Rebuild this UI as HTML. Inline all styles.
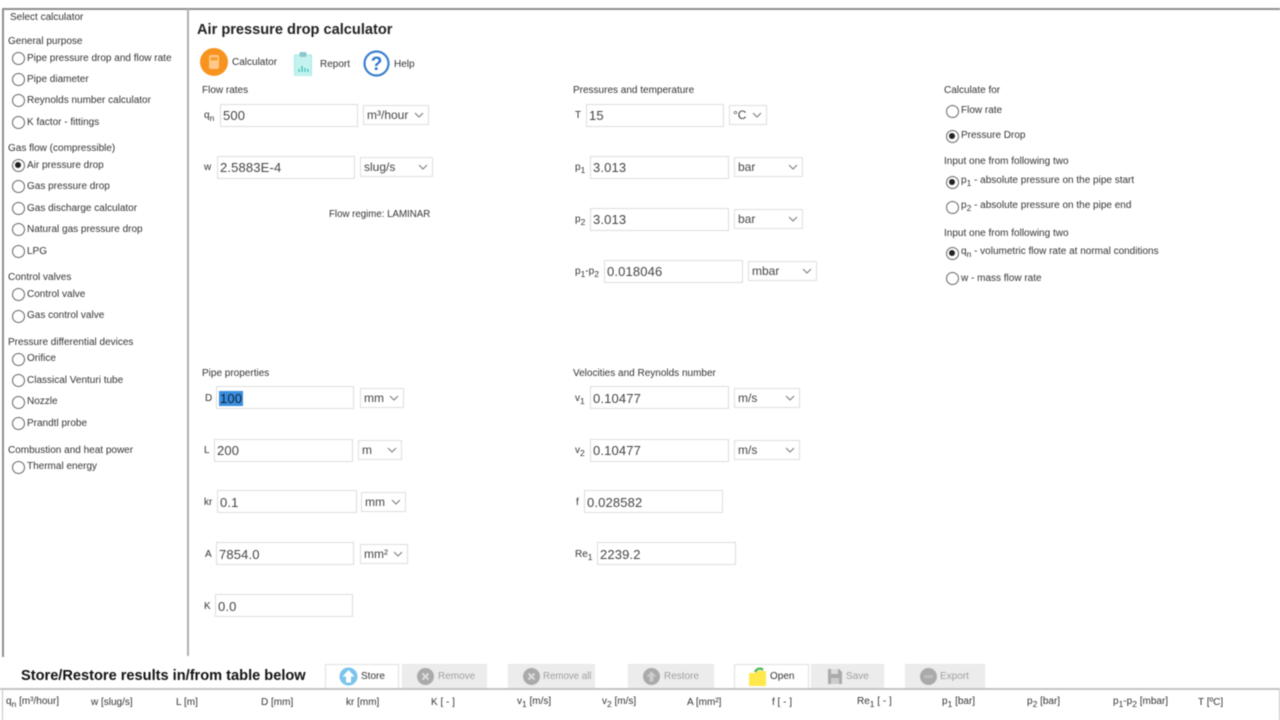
<!DOCTYPE html>
<html><head><meta charset="utf-8"><style>
html,body{margin:0;padding:0;background:#fff}
#p{position:relative;width:1280px;height:720px;overflow:hidden;background:#fff;font-family:"Liberation Sans",sans-serif;color:#333;filter:blur(.45px)}
.t{position:absolute;font-size:10px;line-height:14px;margin-top:1.500px;white-space:nowrap;color:#333}
.r{position:absolute;width:11px;height:11px;margin:-.5px 0 0 -.5px;box-sizing:content-box;border:1px solid #666;border-radius:50%;background:#fff}
.r.c:after{content:"";position:absolute;left:2.500px;top:2.500px;width:6px;height:6px;border-radius:50%;background:#222}
.i{position:absolute;box-sizing:border-box;height:23px;border:1px solid #dcdcdc;font-size:13px;letter-spacing:.15px;line-height:22px;padding-left:2px;color:#444;white-space:nowrap;background:#fff}
.i.o{line-height:24px}
.s{position:absolute;box-sizing:border-box;height:20px;border:1px solid #dedede;font-size:12px;line-height:18px;padding-left:3px;color:#444;white-space:nowrap;background:#fff}
.s svg{position:absolute;right:4px;top:6px}
.l{position:absolute;background:#8f8f8f}
.b{position:absolute;box-sizing:border-box;top:664px;height:25px;border:1px solid #e0e0e0;background:#fff;font-size:10px;line-height:23px;color:#333}
.b.d{background:#ececec;border-color:#e8e8e8;color:#a0a0a0}
.b span{position:absolute;top:0;white-space:nowrap}
.b svg{position:absolute;top:2px}
sub{font-size:8.5px;line-height:0;vertical-align:-3px}
</style></head><body><div id="p">
<div class="l" style="left:2px;top:8px;width:1278px;height:2px"></div>
<div class="l" style="left:2px;top:8px;width:2px;height:649px"></div>
<div class="l" style="left:187px;top:9px;width:2px;height:647px;background:#b0b0b0"></div>
<div class="t" style="left:10px;top:9px">Select calculator</div>
<div class="t" style="left:8px;top:33px">General purpose</div>
<div class="t" style="left:27px;top:50px">Pipe pressure drop and flow rate</div><div class="r" style="left:12px;top:52px"></div>
<div class="t" style="left:27px;top:71px">Pipe diameter</div><div class="r" style="left:12px;top:73px"></div>
<div class="t" style="left:27px;top:92px">Reynolds number calculator</div><div class="r" style="left:12px;top:94px"></div>
<div class="t" style="left:27px;top:114px">K factor - fittings</div><div class="r" style="left:12px;top:116px"></div>
<div class="t" style="left:8px;top:140px">Gas flow (compressible)</div>
<div class="t" style="left:27px;top:157px">Air pressure drop</div><div class="r c" style="left:12px;top:159px"></div>
<div class="t" style="left:27px;top:178px">Gas pressure drop</div><div class="r" style="left:12px;top:180px"></div>
<div class="t" style="left:27px;top:200px">Gas discharge calculator</div><div class="r" style="left:12px;top:202px"></div>
<div class="t" style="left:27px;top:221px">Natural gas pressure drop</div><div class="r" style="left:12px;top:223px"></div>
<div class="t" style="left:27px;top:243px">LPG</div><div class="r" style="left:12px;top:245px"></div>
<div class="t" style="left:8px;top:269px">Control valves</div>
<div class="t" style="left:27px;top:286px">Control valve</div><div class="r" style="left:12px;top:288px"></div>
<div class="t" style="left:27px;top:307px">Gas control valve</div><div class="r" style="left:12px;top:310px"></div>
<div class="t" style="left:8px;top:334px">Pressure differential devices</div>
<div class="t" style="left:27px;top:350px">Orifice</div><div class="r" style="left:12px;top:353px"></div>
<div class="t" style="left:27px;top:372px">Classical Venturi tube</div><div class="r" style="left:12px;top:374px"></div>
<div class="t" style="left:27px;top:393px">Nozzle</div><div class="r" style="left:12px;top:396px"></div>
<div class="t" style="left:27px;top:415px">Prandtl probe</div><div class="r" style="left:12px;top:417px"></div>
<div class="t" style="left:8px;top:442px">Combustion and heat power</div>
<div class="t" style="left:27px;top:458px">Thermal energy</div><div class="r" style="left:12px;top:461px"></div>

<div class="t" style="left:197px;top:21px;margin-top:0;font-size:14.6px;line-height:18px;font-weight:bold;color:#222">Air pressure drop calculator</div>
<svg style="position:absolute;left:200px;top:48px" width="28" height="28"><circle cx="14" cy="14" r="14" fill="#f7931e"/><rect x="9" y="7" width="10" height="14" rx="2" fill="#ffc98a"/><rect x="10.500" y="9" width="7" height="3.500" fill="#f7a030"/></svg>
<div class="t" style="left:232px;top:54px">Calculator</div>
<svg style="position:absolute;left:294px;top:52px" width="18" height="24"><rect x=".5" y="3" width="17" height="21" fill="#c4f3ef" stroke="#a3ebe5"/><rect x="5.500" y="0" width="7" height="5" rx="1.500" fill="#8cc6d0"/><path d="M5 20v-3M8 20v-6M11 20v-4M14 20v-3" stroke="#4cc8be" stroke-width="1.500"/></svg>
<div class="t" style="left:320px;top:56px">Report</div>
<svg style="position:absolute;left:363px;top:50px" width="27" height="27"><circle cx="13.500" cy="13.500" r="12" fill="#fff" stroke="#3a80cf" stroke-width="2.200"/><text x="13.500" y="20" text-anchor="middle" font-family="Liberation Sans" font-size="19" font-weight="bold" fill="#2f78cc">?</text></svg>
<div class="t" style="left:394px;top:56px">Help</div>

<div class="t" style="left:202px;top:82px">Flow rates</div>
<div class="t" style="left:204px;top:107px">q<sub>n</sub></div>
<div class="i" style="left:220px;top:104px;width:138px">500</div>
<div class="s" style="left:363px;top:105px;width:66px">m³/hour<svg width="10" height="6"><path d="M1 1l4 4 4-4" fill="none" stroke="#777"/></svg></div>
<div class="t" style="left:204px;top:159px">w</div>
<div class="i" style="left:217px;top:156px;width:138px">2.5883E-4</div>
<div class="s" style="left:360px;top:157px;width:73px">slug/s<svg width="10" height="6"><path d="M1 1l4 4 4-4" fill="none" stroke="#777"/></svg></div>
<div class="t" style="left:329px;top:206px;font-size:9.700px">Flow regime: LAMINAR</div>

<div class="t" style="left:573px;top:82px">Pressures and temperature</div>
<div class="t" style="left:575px;top:107px">T</div>
<div class="i" style="left:586px;top:104px;width:138px">15</div>
<div class="s" style="left:729px;top:105px;width:38px">°C<svg width="10" height="6"><path d="M1 1l4 4 4-4" fill="none" stroke="#777"/></svg></div>
<div class="t" style="left:575px;top:159px">p<sub>1</sub></div>
<div class="i" style="left:590px;top:156px;width:139px">3.013</div>
<div class="s" style="left:734px;top:157px;width:69px">bar<svg width="10" height="6"><path d="M1 1l4 4 4-4" fill="none" stroke="#777"/></svg></div>
<div class="t" style="left:575px;top:211px">p<sub>2</sub></div>
<div class="i" style="left:590px;top:208px;width:139px">3.013</div>
<div class="s" style="left:734px;top:209px;width:69px">bar<svg width="10" height="6"><path d="M1 1l4 4 4-4" fill="none" stroke="#777"/></svg></div>
<div class="t" style="left:575px;top:263px">p<sub>1</sub>-p<sub>2</sub></div>
<div class="i" style="left:604px;top:260px;width:139px">0.018046</div>
<div class="s" style="left:748px;top:261px;width:69px">mbar<svg width="10" height="6"><path d="M1 1l4 4 4-4" fill="none" stroke="#777"/></svg></div>

<div class="t" style="left:944px;top:82px">Calculate for</div>
<div class="r" style="left:946px;top:105px"></div><div class="t" style="left:961px;top:102px">Flow rate</div>
<div class="r c" style="left:946px;top:130px"></div><div class="t" style="left:961px;top:127px">Pressure Drop</div>
<div class="t" style="left:944px;top:153px">Input one from following two</div>
<div class="r c" style="left:946px;top:176px"></div><div class="t" style="left:961px;top:172px">p<sub>1</sub> - absolute pressure on the pipe start</div>
<div class="r" style="left:946px;top:201px"></div><div class="t" style="left:961px;top:197px">p<sub>2</sub> - absolute pressure on the pipe end</div>
<div class="t" style="left:944px;top:225px">Input one from following two</div>
<div class="r c" style="left:946px;top:247px"></div><div class="t" style="left:961px;top:243px">q<sub>n</sub> - volumetric flow rate at normal conditions</div>
<div class="r" style="left:946px;top:272px"></div><div class="t" style="left:961px;top:270px">w - mass flow rate</div>

<div class="t" style="left:202px;top:365px">Pipe properties</div>
<div class="t" style="left:205px;top:390px">D</div>
<div class="i" style="left:216px;top:386px;width:138px;line-height:24px"><span style="background:#3a8ee0;color:#123;display:inline-block;line-height:15px;padding:0 1px">100</span></div>
<div class="s" style="left:360px;top:388px;width:44px">mm<svg width="10" height="6"><path d="M1 1l4 4 4-4" fill="none" stroke="#777"/></svg></div>
<div class="t" style="left:204px;top:442px">L</div>
<div class="i" style="left:214px;top:439px;width:139px">200</div>
<div class="s" style="left:358px;top:440px;width:44px">m<svg width="10" height="6"><path d="M1 1l4 4 4-4" fill="none" stroke="#777"/></svg></div>
<div class="t" style="left:204px;top:494px">kr</div>
<div class="i o" style="left:217px;top:490px;width:140px">0.1</div>
<div class="s" style="left:361px;top:492px;width:45px">mm<svg width="10" height="6"><path d="M1 1l4 4 4-4" fill="none" stroke="#777"/></svg></div>
<div class="t" style="left:205px;top:546px">A</div>
<div class="i o" style="left:216px;top:542px;width:138px">7854.0</div>
<div class="s" style="left:360px;top:544px;width:48px">mm²<svg width="10" height="6"><path d="M1 1l4 4 4-4" fill="none" stroke="#777"/></svg></div>
<div class="t" style="left:204px;top:598px">K</div>
<div class="i o" style="left:215px;top:594px;width:138px">0.0</div>

<div class="t" style="left:573px;top:365px">Velocities and Reynolds number</div>
<div class="t" style="left:575px;top:390px">v<sub>1</sub></div>
<div class="i o" style="left:590px;top:386px;width:139px">0.10477</div>
<div class="s" style="left:734px;top:388px;width:66px">m/s<svg width="10" height="6"><path d="M1 1l4 4 4-4" fill="none" stroke="#777"/></svg></div>
<div class="t" style="left:575px;top:442px">v<sub>2</sub></div>
<div class="i" style="left:590px;top:439px;width:139px">0.10477</div>
<div class="s" style="left:734px;top:440px;width:66px">m/s<svg width="10" height="6"><path d="M1 1l4 4 4-4" fill="none" stroke="#777"/></svg></div>
<div class="t" style="left:576px;top:494px">f</div>
<div class="i o" style="left:584px;top:490px;width:139px">0.028582</div>
<div class="t" style="left:575px;top:546px">Re<sub>1</sub></div>
<div class="i o" style="left:597px;top:542px;width:139px">2239.2</div>

<div class="t" style="left:21px;top:666px;margin-top:1px;font-size:14.6px;line-height:18px;font-weight:bold;color:#111">Store/Restore results in/from table below</div>
<div class="b" style="left:325px;width:74px"><svg style="left:13px" width="19" height="19"><circle cx="9.500" cy="9.500" r="9" fill="#7cc4ee"/><path d="M9.500 3l6 6.500h-3.500v6h-5v-6h-3.500z" fill="#fff"/></svg><span style="left:35px">Store</span></div>
<div class="b d" style="left:402px;width:85px"><svg style="left:13px" width="19" height="19"><circle cx="9.500" cy="9.500" r="8.500" fill="#aaa"/><path d="M6.500 6.500l6 6M12.500 6.500l-6 6" stroke="#ddd" stroke-width="2"/></svg><span style="left:35px">Remove</span></div>
<div class="b d" style="left:508px;width:87px"><svg style="left:13px" width="19" height="19"><circle cx="9.500" cy="9.500" r="8.500" fill="#aaa"/><path d="M6.500 6.500l6 6M12.500 6.500l-6 6" stroke="#ddd" stroke-width="2"/></svg><span style="left:34px;font-size:9.700px">Remove all</span></div>
<div class="b d" style="left:628px;width:86px"><svg style="left:13px" width="19" height="19"><circle cx="9.500" cy="9.500" r="8.500" fill="#aaa"/><path d="M9.500 4l5 5.500h-3v5h-4v-5h-3z" fill="#ccc"/></svg><span style="left:35px">Restore</span></div>
<div class="b" style="left:734px;width:75px"><svg style="left:13px" width="19" height="20"><path d="M1 6h6l2-2h9v15H1z" fill="#ffe84a"/><path d="M7 5c2-4 6-4 8-2" fill="none" stroke="#5cb85c" stroke-width="2.500"/></svg><span style="left:35px">Open</span></div>
<div class="b d" style="left:811px;width:73px"><svg style="left:15px" width="16" height="18"><path d="M1 2h11l3 3v12H1z" fill="#aaa"/><rect x="4" y="2" width="7" height="5" fill="#ddd"/><rect x="4" y="11" width="8" height="6" fill="#ccc"/></svg><span style="left:34px">Save</span></div>
<div class="b d" style="left:905px;width:80px"><svg style="left:13px" width="19" height="19"><circle cx="9.500" cy="9.500" r="8.500" fill="#aaa"/><rect x="5" y="8" width="9" height="3" fill="#bbb"/></svg><span style="left:34px">Export</span></div>

<div class="l" style="left:0;top:688px;width:1280px;height:2px;background:#c4c4c4"></div>
<div class="l" style="left:2px;top:690px;width:1px;height:30px;background:#c4c4c4"></div>
<div class="l" style="left:1279px;top:690px;width:1px;height:30px;background:#c4c4c4"></div>
<div class="t" style="left:6px;top:693px">q<sub>n</sub> [m³/hour]</div>
<div class="t" style="left:91px;top:694px">w [slug/s]</div>
<div class="t" style="left:176px;top:694px">L [m]</div>
<div class="t" style="left:261px;top:694px">D [mm]</div>
<div class="t" style="left:346px;top:694px">kr [mm]</div>
<div class="t" style="left:431px;top:694px">K [ - ]</div>
<div class="t" style="left:517px;top:693px">v<sub>1</sub> [m/s]</div>
<div class="t" style="left:602px;top:693px">v<sub>2</sub> [m/s]</div>
<div class="t" style="left:687px;top:694px">A [mm²]</div>
<div class="t" style="left:772px;top:694px">f [ - ]</div>
<div class="t" style="left:857px;top:693px">Re<sub>1</sub> [ - ]</div>
<div class="t" style="left:942px;top:693px">p<sub>1</sub> [bar]</div>
<div class="t" style="left:1027px;top:693px">p<sub>2</sub> [bar]</div>
<div class="t" style="left:1113px;top:693px">p<sub>1</sub>-p<sub>2</sub> [mbar]</div>
<div class="t" style="left:1198px;top:694px">T [ºC]</div>
</div></body></html>
